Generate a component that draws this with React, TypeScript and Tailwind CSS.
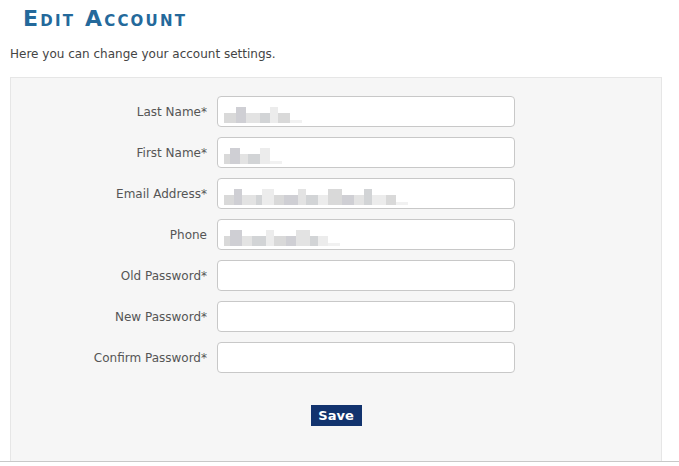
const fields = [
  { label: "Last Name*", blur: [12, 10, 14, 10, 8, 12] },
  { label: "First Name*", blur: [6, 10, 8, 12, 10] },
  { label: "Email Address*", blur: [10, 8, 14, 6, 12, 10, 14, 8, 12, 10, 14, 12, 10, 8, 14, 10] },
  { label: "Phone", blur: [6, 12, 10, 14, 8, 12, 10, 14, 8, 10] },
  { label: "Old Password*", blur: [] },
  { label: "New Password*", blur: [] },
  { label: "Confirm Password*", blur: [] },
];

const shades = ["bg-[#d9d9d9]", "bg-[#cfcfd4]", "bg-[#e3e3e3]", "bg-[#d2d4d6]", "bg-[#ececec]"];

const Blurred = ({ widths }: { widths: number[] }) => (
  <div className="flex items-end h-[16px] mt-[10px] ml-[6px]">
    {widths.map((w, i) => (
      <span
        key={i}
        className={`${shades[i % shades.length]} ${i % 3 === 1 ? "h-[16px]" : "h-[10px]"}`}
        style={{ width: w }}
      />
    ))}
    <span className="bg-[#f1f1f1] h-[3px] w-[12px]" />
  </div>
);

const App = () => {
  return (
    <div className="bg-white min-h-[466px] font-['DejaVu_Sans',Verdana,sans-serif]">
      <div className="pl-[10px] pr-[17px]">
        <h1
          className="pt-[6px] pl-[13px] text-[22px] leading-[26px] font-bold text-[#24699b] tracking-[2.2px]"
          style={{ fontVariant: "small-caps" }}
        >
          Edit Account
        </h1>
        <p className="mt-[14px] text-[12px] leading-[16px] text-[#444]">
          Here you can change your account settings.
        </p>
        <div className="mt-[15px] h-[384px] bg-[#f6f6f6] border border-b-0 border-[#e6e6e6] pt-[18px]">
          <div className="flex flex-col gap-[10px]">
            {fields.map((f) => (
              <div key={f.label} className="flex items-center">
                <label className="w-[197px] pr-[1px] text-right text-[12px] text-[#555]">{f.label}</label>
                <div className="ml-[9px] w-[298px] h-[31px] bg-white border border-[#c8c8c8] rounded-[4px] overflow-hidden">
                  {f.blur.length > 0 && <Blurred widths={f.blur} />}
                </div>
              </div>
            ))}
          </div>
          <div className="flex justify-center mt-[32px]">
            <button className="w-[51px] h-[21px] bg-[#12336e] text-white text-[13px] font-bold leading-[21px]">
              Save
            </button>
          </div>
        </div>
      </div>
      <div className="border-t border-[#c8c8c8]" />
    </div>
  );
};

export default App;
